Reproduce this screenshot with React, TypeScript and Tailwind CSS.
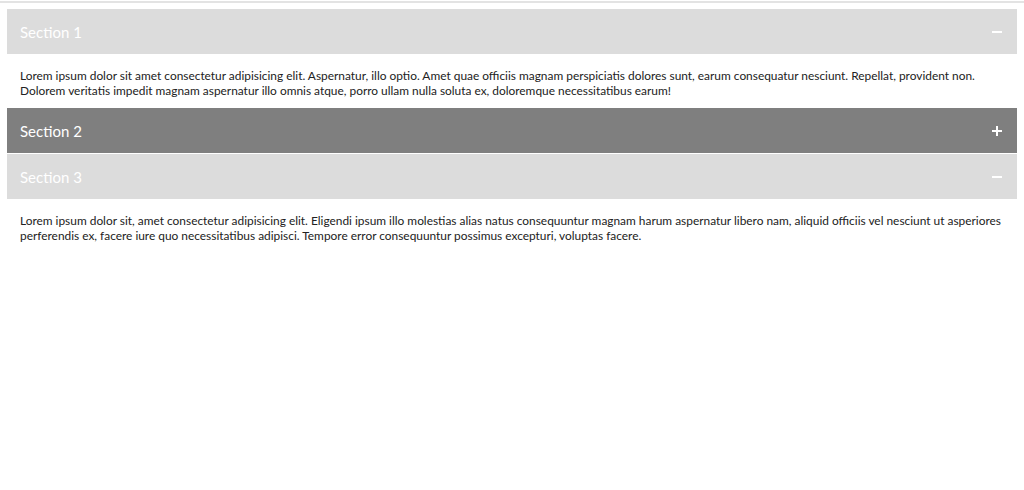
import { useState } from "react";

interface Section {
  id: number;
  title: string;
  body: string;
}

const SECTIONS: Section[] = [
  {
    id: 1,
    title: "Section 1",
    body: "Lorem ipsum dolor sit amet consectetur adipisicing elit. Aspernatur, illo optio. Amet quae officiis magnam perspiciatis dolores sunt, earum consequatur nesciunt. Repellat, provident non. Dolorem veritatis impedit magnam aspernatur illo omnis atque, porro ullam nulla soluta ex, doloremque necessitatibus earum!",
  },
  {
    id: 2,
    title: "Section 2",
    body: "Lorem ipsum dolor sit amet consectetur adipisicing elit. Quibusdam, voluptates.",
  },
  {
    id: 3,
    title: "Section 3",
    body: "Lorem ipsum dolor sit, amet consectetur adipisicing elit. Eligendi ipsum illo molestias alias natus consequuntur magnam harum aspernatur libero nam, aliquid officiis vel nesciunt ut asperiores perferendis ex, facere iure quo necessitatibus adipisci. Tempore error consequuntur possimus excepturi, voluptas facere.",
  },
];

function Icon({ open }: { open: boolean }) {
  return (
    <svg width="12" height="12" viewBox="0 0 12 12" className="shrink-0">
      <rect x="1" y="5" width="10" height="2" fill="white" />
      {!open && <rect x="5" y="1" width="2" height="10" fill="white" />}
    </svg>
  );
}

export default function App() {
  const [open, setOpen] = useState<Record<number, boolean>>({ 1: true, 2: false, 3: true });

  return (
    <div className="min-h-screen bg-white" style={{ fontFamily: "Lato, 'Open Sans', sans-serif" }}>
      {/* top rule */}
      <div className="h-[2px] mt-px bg-[#e3e3e3]" />

      <div className="mx-[7px] mt-[6px] w-[1010px]">
        {SECTIONS.map((s) => {
          const isOpen = open[s.id];
          return (
            <div key={s.id}>
              <button
                onClick={() => setOpen({ ...open, [s.id]: !isOpen })}
                className={`flex w-full h-[46px] items-center justify-between pt-px pl-[13px] pr-[14px] border-b border-white cursor-pointer ${
                  isOpen ? "bg-[#dcdcdc]" : "bg-[#7f7f7f]"
                }`}
              >
                <span className="text-[15px] text-white">{s.title}</span>
                <Icon open={isOpen} />
              </button>
              {isOpen && (
                <p className="pl-[13px] pr-[12px] pt-[13px] pb-[10px] text-[11.9px] leading-[15px] text-[#222]">
                  {s.body}
                </p>
              )}
            </div>
          );
        })}
      </div>
    </div>
  );
}
